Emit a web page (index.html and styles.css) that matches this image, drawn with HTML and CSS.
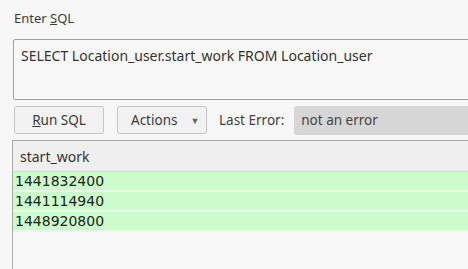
FILE: index.html
```html
<!DOCTYPE html>
<html lang="en">
<head>
  <meta charset="UTF-8" />
  <title>Execute SQL</title>
  <link rel="stylesheet" href="styles.css">
</head>
<body>
  <div class="panel">
    <div class="editor-label">Enter <u>S</u>QL</div>
    <div class="editor">SELECT Location_user.start_work FROM Location_user</div>

    <div class="toolbar">
      <button type="button" class="btn"><u>R</u>un SQL</button>
      <button type="button" class="btn btn-menu">Actions <span class="arrow">&#9660;</span></button>
      <span class="error-label">Last Error:</span>
      <div class="error-field">not an error</div>
    </div>

    <!-- results grid -->
    <div class="results">
      <div class="results-head">start_work</div>
      <div class="row">1441832400</div>
      <div class="row">1441114940</div>
      <div class="row">1448920800</div>
    </div>
  </div>
</body>
</html>
```

FILE: styles.css
```css
* {
  box-sizing: border-box;
}
body {
  margin: 0;
  background: #f7f7f7;
  font-family: 'Noto Sans', 'Open Sans', sans-serif;
  font-size: 13px;
  color: #333;
  overflow: hidden;
}
.panel {
  padding: 9px 0 0 12px;
  width: 100vw;
  overflow: hidden;
}
.editor-label {
  padding-left: 2px;
  height: 18px;
  line-height: 18px;
  color: #3c3c3c;
}
.editor {
  margin: 12px -10px 0 1px;
  height: 61px;
  padding: 7px 7px;
  border: 1px solid #a0a0a0;
  border-radius: 2px;
  background: #f8f8f8;
  font-size: 14px;
  line-height: 18px;
  color: #333;
}
.toolbar {
  display: flex;
  align-items: center;
  height: 40px;
  padding: 0 0 0 2px;
  margin-right: -10px;
}
.btn {
  flex: none;
  width: 90px;
  height: 28px;
  margin-right: 13px;
  border: 1px solid #c4c4c4;
  border-radius: 3px;
  background: #f2f2f2;
  font-family: inherit;
  font-size: 13.5px;
  color: #3a3a3a;
  padding: 0;
}
.btn-menu {
  display: flex;
  align-items: center;
  padding-left: 13px;
  margin-right: 12px;
}
.btn-menu .arrow {
  font-size: 9px;
  color: #666;
  margin-left: 13px;
}
.error-label {
  color: #444;
  font-size: 13.5px;
  margin-right: 10px;
}
.error-field {
  flex: 1;
  height: 29px;
  line-height: 29px;
  padding-left: 7px;
  background: #d6d6d6;
  border-radius: 3px;
  font-size: 13.5px;
  color: #444;
}
.results {
  border-top: 1px solid #aaa;
  border-left: 1px solid #aaa;
  height: 140px;
  background: #f8f8f8;
}
.results-head {
  height: 31px;
  line-height: 31px;
  padding-left: 7px;
  background: #efefef;
  border-bottom: 1px solid #d8d8d8;
  font-size: 14px;
}
.row {
  height: 20px;
  line-height: 18px;
  padding-left: 2px;
  background: #ccfccc;
  border-bottom: 2px solid #e6f8e6;
  font-family: 'DejaVu Sans', sans-serif;
  font-size: 14px;
  color: #222;
}
```
